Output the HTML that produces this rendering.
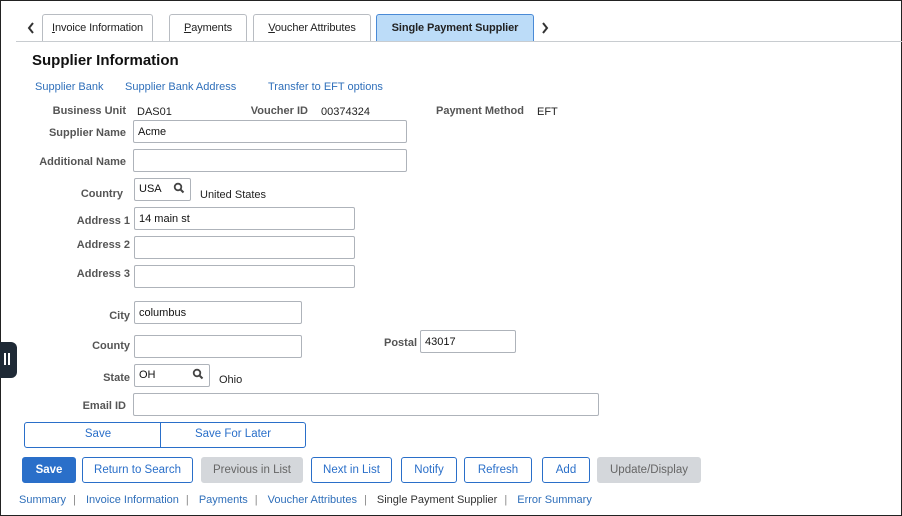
<!DOCTYPE html>
<html><head><style>
*{box-sizing:border-box;margin:0;padding:0}
body{width:902px;height:516px;background:#fff;font-family:"Liberation Sans",Arial,sans-serif;font-size:11px;color:#222;position:relative;overflow:hidden}
.frame{position:absolute;left:0;top:0;width:902px;height:516px;border:1px solid #222}
.a{position:absolute;white-space:nowrap}
.tab{position:absolute;top:14px;height:28px;border:1px solid #b8bcc2;border-bottom:none;border-radius:3px 3px 0 0;background:#fff;font-size:11px;text-align:center;line-height:27px;color:#222;white-space:nowrap;letter-spacing:-0.1px}
.lbl{position:absolute;font-weight:bold;color:#555;text-align:right;font-size:11px}
.in{position:absolute;border:1px solid #aeb3ba;border-radius:2px;background:#fff;font-size:11px;padding:5px 0 0 4px;color:#111}
.lnk{position:absolute;color:#2f6fba;font-size:11px;white-space:nowrap}
.btn{position:absolute;top:457px;height:26px;border:1px solid #2a6fc9;border-radius:3px;color:#2a6fc9;text-align:center;line-height:25px;font-size:11.5px;background:#fff}
.g{background:#d4d7db;border-color:#d4d7db;color:#666}
.mag{position:absolute;width:12px;height:12px}
.foot{position:absolute;top:494px;font-size:11px;color:#2f6fba;white-space:nowrap}
.sep{color:#888;margin:0 7px}
</style></head><body>
<div class="frame"></div>
<svg class="a" style="left:26px;top:21px" width="10" height="14"><path d="M7 2 L3 7 L7 12" stroke="#333" stroke-width="2" fill="none"/></svg>
<div class="tab" style="left:42px;width:111px"><u>I</u>nvoice Information</div>
<div class="tab" style="left:169px;width:78px"><u>P</u>ayments</div>
<div class="tab" style="left:253px;width:118px"><u>V</u>oucher Attributes</div>
<div class="tab" style="left:376px;width:158px;background:#bcdcf8;border-color:#4a8ad6;font-weight:bold">Single Payment Supplier</div>
<svg class="a" style="left:540px;top:21px" width="10" height="14"><path d="M3 2 L7 7 L3 12" stroke="#333" stroke-width="2" fill="none"/></svg>
<div class="a" style="left:16px;top:41px;width:886px;height:1px;background:#c8ccd0"></div>
<div class="a" style="left:32px;top:52px;font-size:15px;font-weight:bold;color:#111">Supplier Information</div>
<div class="lnk" style="left:35px;top:81px">Supplier Bank</div>
<div class="lnk" style="left:125px;top:81px">Supplier Bank Address</div>
<div class="lnk" style="left:268px;top:81px">Transfer to EFT options</div>

<div class="lbl" style="left:30px;top:105px;width:96px">Business Unit</div>
<div class="a" style="left:137px;top:106px">DAS01</div>
<div class="lbl" style="left:230px;top:105px;width:78px">Voucher ID</div>
<div class="a" style="left:321px;top:106px">00374324</div>
<div class="lbl" style="left:420px;top:105px;width:104px">Payment Method</div>
<div class="a" style="left:537px;top:106px">EFT</div>

<div class="lbl" style="left:20px;top:127px;width:106px">Supplier Name</div>
<div class="in" style="left:133px;top:120px;width:274px;height:23px">Acme</div>
<div class="lbl" style="left:20px;top:156px;width:106px">Additional Name</div>
<div class="in" style="left:133px;top:149px;width:274px;height:23px"></div>

<div class="lbl" style="left:20px;top:188px;width:103px">Country</div>
<div class="in" style="left:134px;top:178px;width:57px;height:23px;padding-top:4px">USA</div>
<svg class="mag" style="left:173px;top:182px" viewBox="0 0 12 12"><circle cx="5" cy="5" r="3.3" stroke="#444" stroke-width="1.8" fill="none"/><path d="M7.5 7.5 L10.5 10.5" stroke="#444" stroke-width="2"/></svg>
<div class="a" style="left:200px;top:189px">United States</div>

<div class="lbl" style="left:20px;top:215px;width:110px">Address 1</div>
<div class="in" style="left:134px;top:207px;width:221px;height:23px">14 main st</div>
<div class="lbl" style="left:20px;top:239px;width:110px">Address 2</div>
<div class="in" style="left:134px;top:236px;width:221px;height:23px"></div>
<div class="lbl" style="left:20px;top:268px;width:110px">Address 3</div>
<div class="in" style="left:134px;top:265px;width:221px;height:23px"></div>

<div class="lbl" style="left:20px;top:310px;width:110px">City</div>
<div class="in" style="left:134px;top:301px;width:168px;height:23px">columbus</div>
<div class="lbl" style="left:20px;top:340px;width:110px">County</div>
<div class="in" style="left:134px;top:335px;width:168px;height:23px"></div>
<div class="lbl" style="left:370px;top:337px;width:47px">Postal</div>
<div class="in" style="left:420px;top:330px;width:96px;height:23px">43017</div>

<div class="lbl" style="left:20px;top:372px;width:110px">State</div>
<div class="in" style="left:134px;top:364px;width:76px;height:23px;padding-top:4px">OH</div>
<svg class="mag" style="left:192px;top:368px" viewBox="0 0 12 12"><circle cx="5" cy="5" r="3.3" stroke="#444" stroke-width="1.8" fill="none"/><path d="M7.5 7.5 L10.5 10.5" stroke="#444" stroke-width="2"/></svg>
<div class="a" style="left:219px;top:374px">Ohio</div>

<div class="lbl" style="left:20px;top:400px;width:106px">Email ID</div>
<div class="in" style="left:133px;top:393px;width:466px;height:23px"></div>

<div class="a" style="left:24px;top:422px;width:282px;height:26px;border:1px solid #2a6fc9;border-radius:3px"></div>
<div class="a" style="left:160px;top:422px;width:1px;height:26px;background:#2a6fc9"></div>
<div class="a" style="left:30px;top:428px;width:136px;text-align:center;color:#2a6fc9;font-size:11.5px">Save</div>
<div class="a" style="left:160px;top:428px;width:146px;text-align:center;color:#2a6fc9;font-size:11.5px">Save For Later</div>

<div class="btn" style="left:22px;width:54px;background:#2a6fc9;color:#fff;font-weight:bold">Save</div>
<div class="btn" style="left:82px;width:111px">Return to Search</div>
<div class="btn g" style="left:201px;width:102px">Previous in List</div>
<div class="btn" style="left:311px;width:81px">Next in List</div>
<div class="btn" style="left:401px;width:56px">Notify</div>
<div class="btn" style="left:464px;width:68px">Refresh</div>
<div class="btn" style="left:542px;width:48px">Add</div>
<div class="btn g" style="left:597px;width:104px">Update/Display</div>

<div class="foot" style="left:19px">Summary<span class="sep">|</span> Invoice Information<span class="sep">|</span> Payments<span class="sep">|</span> Voucher Attributes<span class="sep">|</span> <span style="color:#333">Single Payment Supplier</span><span class="sep">|</span> Error Summary</div>

<div class="a" style="left:0;top:342px;width:17px;height:36px;background:#1f2a36;border-radius:0 6px 6px 0"></div>
<div class="a" style="left:4px;top:353px;width:2px;height:12px;background:#fff"></div>
<div class="a" style="left:8px;top:353px;width:2px;height:12px;background:#fff"></div>
</body></html>
